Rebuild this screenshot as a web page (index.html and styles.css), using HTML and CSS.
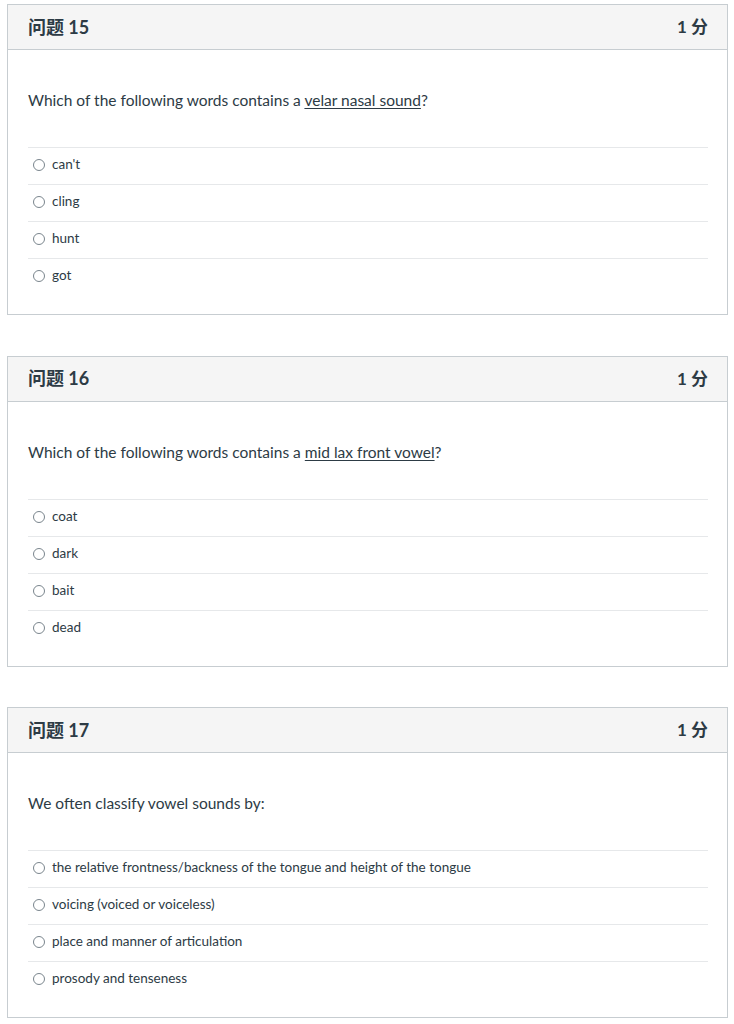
FILE: index.html
```html
<!DOCTYPE html>
<html lang="zh">
<head>
<meta charset="utf-8">
<link rel="stylesheet" href="styles.css">
</head>
<body>
<div class="page">
  <div class="card">
    <div class="card-head">
      <span class="q-title">问题 15</span>
      <span class="q-points">1 分</span>
    </div>
    <div class="card-body">
      <p class="q-text">Which of the following words contains a <u>velar nasal sound</u>?</p>
      <div class="answers">
        <div class="answer"><span class="radio"></span><span>can't</span></div>
        <div class="answer"><span class="radio"></span><span>cling</span></div>
        <div class="answer"><span class="radio"></span><span>hunt</span></div>
        <div class="answer"><span class="radio"></span><span>got</span></div>
      </div>
    </div>
  </div>
  <div class="card">
    <div class="card-head">
      <span class="q-title">问题 16</span>
      <span class="q-points">1 分</span>
    </div>
    <div class="card-body">
      <p class="q-text">Which of the following words contains a <u>mid lax front vowel</u>?</p>
      <div class="answers">
        <div class="answer"><span class="radio"></span><span>coat</span></div>
        <div class="answer"><span class="radio"></span><span>dark</span></div>
        <div class="answer"><span class="radio"></span><span>bait</span></div>
        <div class="answer"><span class="radio"></span><span>dead</span></div>
      </div>
    </div>
  </div>
  <div class="card">
    <div class="card-head">
      <span class="q-title">问题 17</span>
      <span class="q-points">1 分</span>
    </div>
    <div class="card-body">
      <p class="q-text">We often classify vowel sounds by:</p>
      <div class="answers">
        <div class="answer"><span class="radio"></span><span>the relative frontness/backness of the tongue and height of the tongue</span></div>
        <div class="answer"><span class="radio"></span><span>voicing (voiced or voiceless)</span></div>
        <div class="answer"><span class="radio"></span><span>place and manner of articulation</span></div>
        <div class="answer"><span class="radio"></span><span>prosody and tenseness</span></div>
      </div>
    </div>
  </div>
</div>
</body>
</html>
```
FILE: styles.css
```css
html, body {
  margin: 0;
  padding: 0;
  background: #ffffff;
}
body {
  font-family: Lato, "Noto Sans CJK SC", sans-serif;
  color: #2d3b45;
}
.page {
  padding: 4px 6px 0 7px;
  display: flex;
  flex-direction: column;
  gap: 40.5px;
}
.card {
  border: 1px solid #c7cdd1;
  background: #fff;
}
.card-head {
  height: 45px;
  box-sizing: border-box;
  background: #f5f5f5;
  border-bottom: 1px solid #c7cdd1;
  display: flex;
  align-items: center;
  justify-content: space-between;
  padding: 0 19px 3px 20px;
}
.q-title {
  font-size: 18px;
  font-weight: 700;
}
.q-points {
  font-size: 17px;
  font-weight: 700;
}
.card-body {
  padding: 0 19px 19px 20px;
}
.q-text {
  margin: 0;
  padding: 38px 0 35px;
  font-size: 15.5px;
  line-height: 24px;
}
.q-text u {
  text-decoration-thickness: 1px;
  text-underline-offset: 2px;
}
.answer {
  height: 37px;
  box-sizing: border-box;
  border-top: 1px solid #e6e8ea;
  display: flex;
  align-items: center;
  gap: 7px;
  padding-left: 5px;
  padding-bottom: 4px;
  font-size: 13.5px;
}
.radio {
  width: 12px;
  height: 12px;
  box-sizing: border-box;
  border: 1px solid #7a858d;
  border-radius: 50%;
  flex: none;
  position: relative;
  top: 1px;
}
```
